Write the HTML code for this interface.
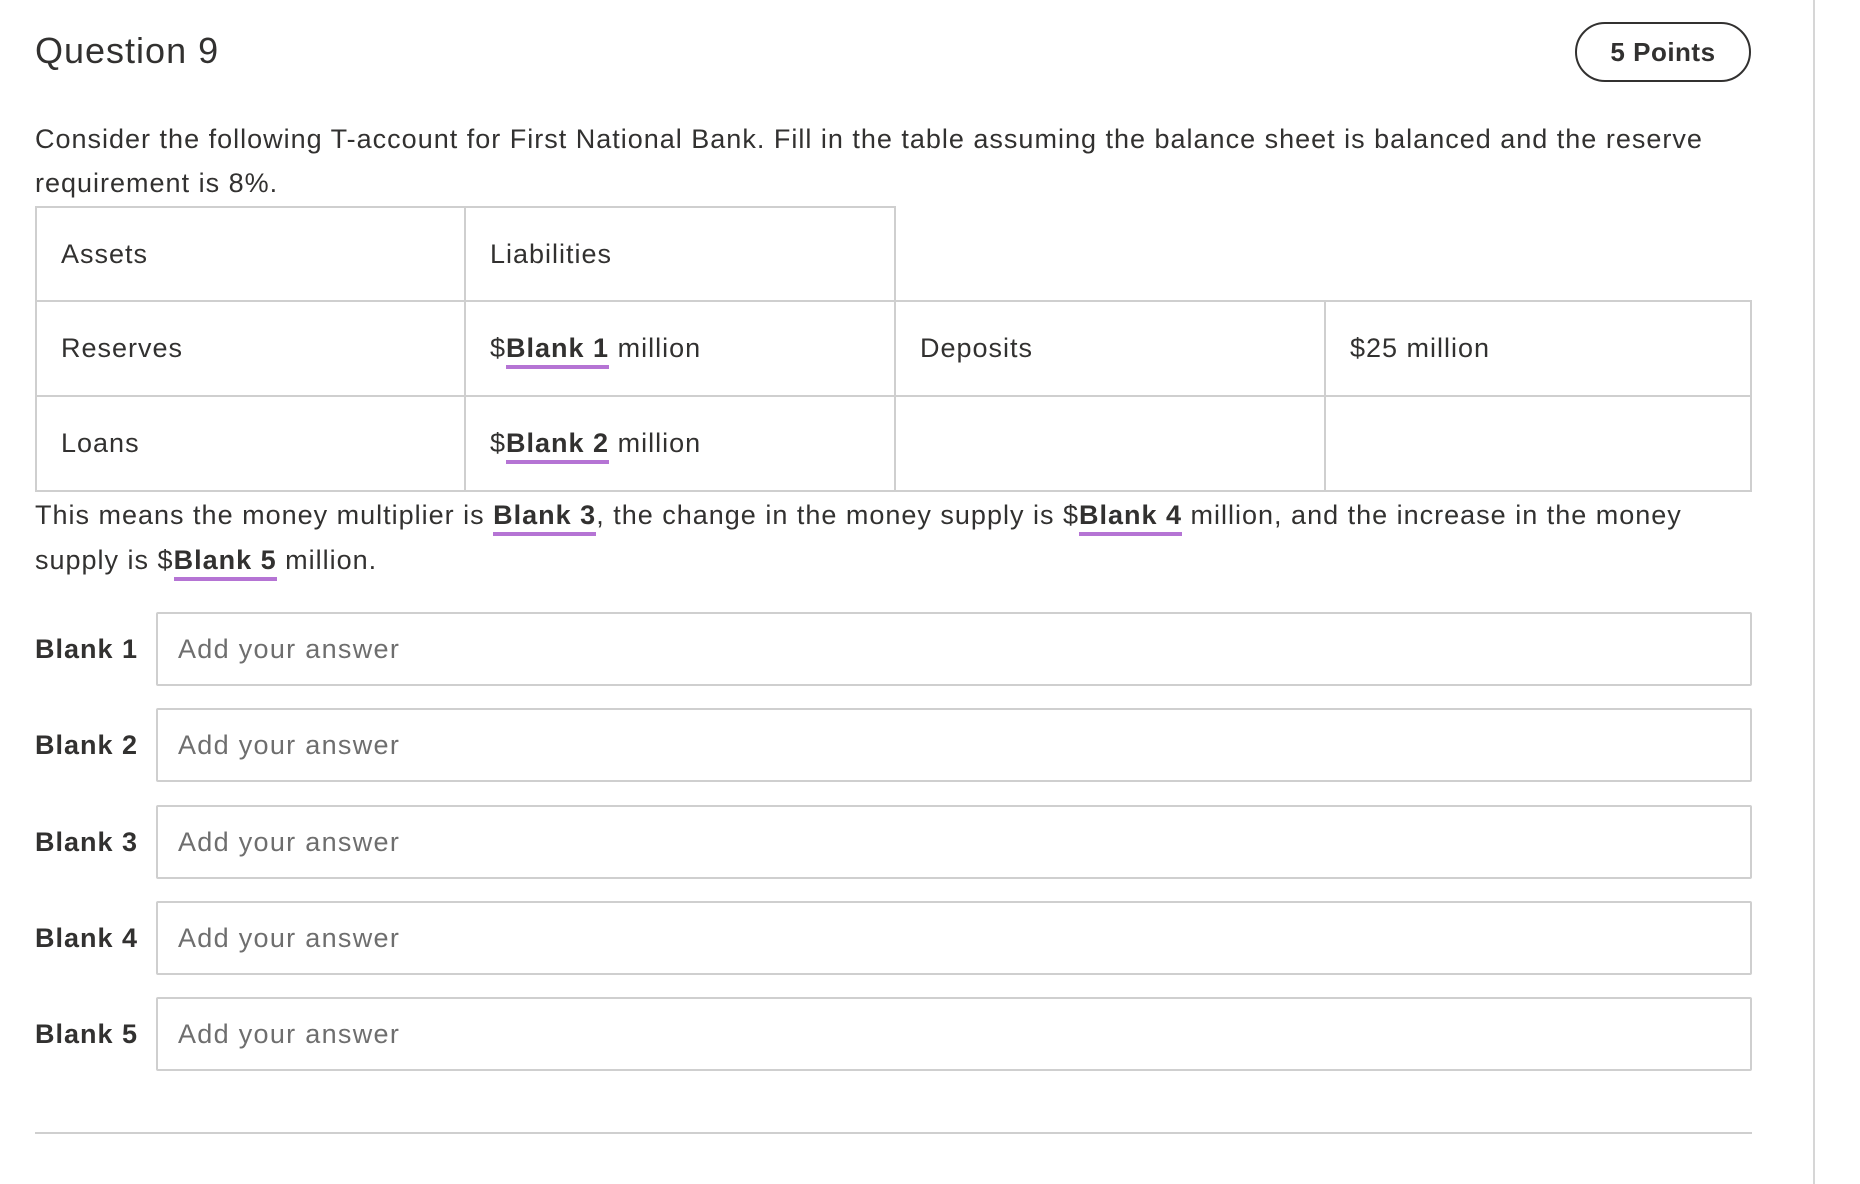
<!DOCTYPE html>
<html><head><meta charset="utf-8"><style>
*{box-sizing:border-box;margin:0;padding:0}
body{width:1860px;height:1184px;background:#fff;font-family:"Liberation Sans",Arial,sans-serif;color:#323130;position:relative;overflow:hidden}
.abs{position:absolute}
.title{left:35px;top:29px;font-size:36px;line-height:44px;letter-spacing:1px}
.pill{left:1575px;top:22px;width:176px;height:60px;border:2px solid #323130;border-radius:30px;font-size:26px;font-weight:bold;display:flex;align-items:center;justify-content:center;letter-spacing:0.5px}
.p{left:35px;font-size:27px;line-height:44px;white-space:nowrap;letter-spacing:1px}
.cell{position:absolute;border:2px solid #cfcfcf;font-size:27px;letter-spacing:1px;padding-left:24px;display:flex;align-items:center;white-space:nowrap}
b.u{display:inline-block;border-bottom:4px solid #b574d4;line-height:30px;padding-bottom:2px;margin-bottom:-6px}
.lab{left:35px;font-size:27px;font-weight:bold;width:120px;letter-spacing:1px}
.inp{left:156px;width:1596px;height:74px;border:2px solid #cfcfcf;border-radius:2px;font-size:27px;letter-spacing:1.3px;color:#6e6e6e;padding-left:20px;display:flex;align-items:center}
</style></head><body>
<div class="abs title">Question 9</div>
<div class="abs pill">5 Points</div>
<div class="abs p" style="top:117px">Consider the following T-account for First National Bank. Fill in the table assuming the balance sheet is balanced and the reserve</div>
<div class="abs p" style="top:161px">requirement is 8%.</div>

<div class="cell" style="left:35px;top:206px;width:431px;height:96px">Assets</div>
<div class="cell" style="left:464px;top:206px;width:432px;height:96px">Liabilities</div>

<div class="cell" style="left:35px;top:300px;width:431px;height:97px">Reserves</div>
<div class="cell" style="left:464px;top:300px;width:432px;height:97px"><span>$<b class="u">Blank 1</b> million</span></div>
<div class="cell" style="left:894px;top:300px;width:432px;height:97px">Deposits</div>
<div class="cell" style="left:1324px;top:300px;width:428px;height:97px">$25 million</div>

<div class="cell" style="left:35px;top:395px;width:431px;height:97px">Loans</div>
<div class="cell" style="left:464px;top:395px;width:432px;height:97px"><span>$<b class="u">Blank 2</b> million</span></div>
<div class="cell" style="left:894px;top:395px;width:432px;height:97px"></div>
<div class="cell" style="left:1324px;top:395px;width:428px;height:97px"></div>

<div class="abs p" style="top:493px">This means the money multiplier is <b class="u">Blank 3</b>, the change in the money supply is $<b class="u">Blank 4</b> million, and the increase in the money</div>
<div class="abs p" style="top:538px">supply is $<b class="u">Blank 5</b> million.</div>

<div class="abs lab" style="top:634px">Blank 1</div><div class="abs inp" style="top:612px">Add your answer</div>
<div class="abs lab" style="top:730px">Blank 2</div><div class="abs inp" style="top:708px">Add your answer</div>
<div class="abs lab" style="top:827px">Blank 3</div><div class="abs inp" style="top:805px">Add your answer</div>
<div class="abs lab" style="top:923px">Blank 4</div><div class="abs inp" style="top:901px">Add your answer</div>
<div class="abs lab" style="top:1019px">Blank 5</div><div class="abs inp" style="top:997px">Add your answer</div>

<div class="abs" style="left:35px;top:1132px;width:1717px;height:2px;background:#cfcfcf"></div>
<div class="abs" style="left:1813px;top:0;width:2px;height:1184px;background:#d6d6d6"></div>
</body></html>
